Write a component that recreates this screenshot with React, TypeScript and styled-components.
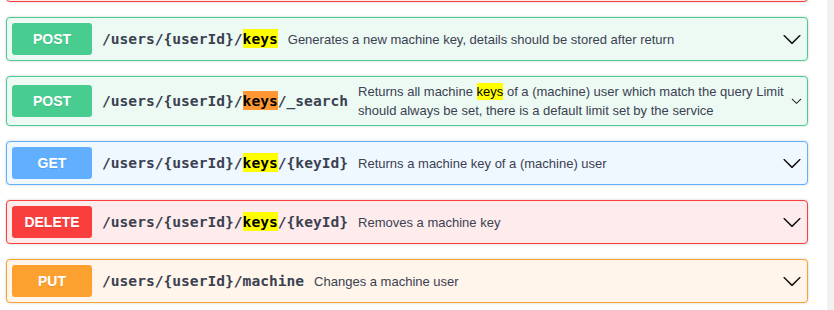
import * as React from 'react'
import styled, { createGlobalStyle } from 'styled-components'

type Method = 'GET' | 'POST' | 'PUT' | 'DELETE'

interface IOperation {
	method: Method
	path: React.ReactNode
	description: React.ReactNode
}

const palette: Record<Method, { main: string; tint: string }> = {
	GET: { main: '#61affe', tint: '#eff7ff' },
	POST: { main: '#49cc90', tint: '#edfaf4' },
	PUT: { main: '#fca130', tint: '#fff5ea' },
	DELETE: { main: '#f93e3e', tint: '#feecec' },
}

const GlobalStyle = createGlobalStyle`
	html, body {
		margin: 0;
		padding: 0;
		background: #ffffff;
		overflow: hidden;
	}
	body {
		font-family: "Liberation Sans", Arial, sans-serif;
	}
`

const Page = styled.div`
	display: flex;
	width: 834px;
	height: 310px;
	overflow: hidden;
`

const Main = styled.div`
	flex: 1;
	min-width: 0;
	padding: 0 19px 0 6px;
`

const ScrollTrack = styled.div`
	width: 7px;
	height: 100%;
	background: #f1f1f1;
`

/* the first block is scrolled mostly out of view */
const List = styled.div`
	display: flex;
	flex-direction: column;
	gap: 15px;
	margin-top: -42px;
`

const Block = styled.div<{ $method: Method }>`
	display: flex;
	align-items: center;
	padding: 5px;
	border: 1px solid ${(p) => palette[p.$method].main};
	border-radius: 4px;
	background: ${(p) => palette[p.$method].tint};
	box-shadow: 0 0 3px rgba(0, 0, 0, 0.19);
`

const Badge = styled.span<{ $method: Method }>`
	flex-shrink: 0;
	min-width: 80px;
	padding: 6px 0;
	line-height: 20px;
	border-radius: 3px;
	background: ${(p) => palette[p.$method].main};
	color: #ffffff;
	font-family: "Liberation Sans", Arial, sans-serif;
	font-size: 14px;
	font-weight: 700;
	text-align: center;
	text-shadow: 0 1px 0 rgba(0, 0, 0, 0.1);
`

const Path = styled.span`
	flex-shrink: 0;
	padding: 0 10px;
	color: #3b4151;
	font-family: "DejaVu Sans Mono", "Liberation Mono", monospace;
	font-size: 14.6px;
	font-weight: 700;
	line-height: 18px;
	white-space: nowrap;
`

const Description = styled.div`
	flex: 1 1 auto;
	color: #3b4151;
	font-family: "Liberation Sans", Arial, sans-serif;
	font-size: 13px;
	line-height: 19px;
`

const Match = styled.mark<{ $active?: boolean }>`
	background: ${(p) => (p.$active ? '#ff9632' : '#ffff00')};
	color: #000000;
	padding: 1px 0;
`

const Arrow = styled.svg`
	flex: 0 1 20px;
	min-width: 0;
	fill: #111111;
`

const operations: IOperation[] = [
	{
		method: 'DELETE',
		path: <>/users/{'{userId}'}/pats/{'{tokenId}'}</>,
		description: 'Removes a personal access token',
	},
	{
		method: 'POST',
		path: (
			<>
				/users/{'{userId}'}/<Match>keys</Match>
			</>
		),
		description: 'Generates a new machine key, details should be stored after return',
	},
	{
		method: 'POST',
		path: (
			<>
				/users/{'{userId}'}/<Match $active>keys</Match>/_search
			</>
		),
		description: (
			<>
				Returns all machine <Match>keys</Match> of a (machine) user which match the query Limit should always be
				set, there is a default limit set by the service
			</>
		),
	},
	{
		method: 'GET',
		path: (
			<>
				/users/{'{userId}'}/<Match>keys</Match>/{'{keyId}'}
			</>
		),
		description: 'Returns a machine key of a (machine) user',
	},
	{
		method: 'DELETE',
		path: (
			<>
				/users/{'{userId}'}/<Match>keys</Match>/{'{keyId}'}
			</>
		),
		description: 'Removes a machine key',
	},
	{
		method: 'PUT',
		path: <>/users/{'{userId}'}/machine</>,
		description: 'Changes a machine user',
	},
]

export default function App() {
	return (
		<>
			<GlobalStyle />
			<Page>
				<Main>
					<List>
						{operations.map((op, index) => (
							<Block key={index} $method={op.method}>
								<Badge $method={op.method}>{op.method}</Badge>
								<Path>{op.path}</Path>
								<Description>{op.description}</Description>
								<Arrow viewBox="0 0 20 20" width="20" height="20">
									<path d="M17.418 6.109c.272-.268.709-.268.979 0s.271.701 0 .969l-7.908 7.83c-.27.268-.707.268-.979 0l-7.908-7.83c-.27-.268-.27-.701 0-.969.271-.268.709-.268.979 0L10 13.25l7.418-7.141z" />
								</Arrow>
							</Block>
						))}
					</List>
				</Main>
				<ScrollTrack />
			</Page>
		</>
	)
}
